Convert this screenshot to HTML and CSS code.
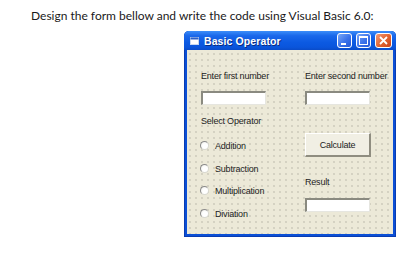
FILE: index.html
```html
<!DOCTYPE html>
<html>
<head>
<meta charset="utf-8">
<link rel="stylesheet" href="styles.css">
</head>
<body>
<p class="task">Design the form bellow and write the code using Visual Basic 6.0:</p>
<div class="window">
  <div class="titlebar">
    <svg class="app-icon" width="9" height="8" viewBox="0 0 9 8">
      <rect x="0.5" y="0.5" width="8" height="7" fill="#fff" stroke="#c8d8f0"/>
      <rect x="0.5" y="0.5" width="8" height="2" fill="#2a5fc8"/>
    </svg>
    <span class="title">Basic Operator</span>
    <div class="controls">
      <span class="cbtn minimize"><svg width="15" height="15" viewBox="0 0 15 15"><rect x="4" y="10" width="5" height="2" fill="#fff"/></svg></span>
      <span class="cbtn maximize"><svg width="15" height="15" viewBox="0 0 15 15"><rect x="3.5" y="3.5" width="8" height="8" fill="none" stroke="#fff"/><rect x="3" y="3" width="9" height="2" fill="#fff"/></svg></span>
      <span class="cbtn close"><svg width="15" height="15" viewBox="0 0 15 15"><path d="M4 4 L11 11 M11 4 L4 11" stroke="#fff" stroke-width="1.8"/></svg></span>
    </div>
  </div>
  <div class="client">
    <div class="col left">
      <div class="label first">Enter first number</div>
      <div class="textbox"></div>
      <div class="label select">Select Operator</div>
      <div class="radio r1"><span class="dot"></span>Addition</div>
      <div class="radio"><span class="dot"></span>Subtraction</div>
      <div class="radio r3"><span class="dot"></span>Multiplication</div>
      <div class="radio"><span class="dot"></span>Diviation</div>
    </div>
    <div class="col right">
      <div class="label first">Enter second number</div>
      <div class="textbox"></div>
      <div class="button">Calculate</div>
      <div class="label result">Result</div>
      <div class="textbox last"></div>
    </div>
  </div>
</div>
</body>
</html>
```
FILE: styles.css
```css
html, body {
  margin: 0;
  background: #fff;
}
.task {
  margin: 0;
  padding: 9px 0 0 31px;
  font-family: Lato, "Open Sans", sans-serif;
  font-size: 12px;
  line-height: 14px;
  color: #1a1a1a;
}
.window {
  margin: 8px 0 0 184px;
  width: 212px;
  height: 206px;
  box-sizing: border-box;
  background: #0b4fd6;
  border-radius: 5px 5px 0 0;
  padding: 0 3px 3px 3px;
  display: flex;
  flex-direction: column;
  box-shadow: inset 0 0 0 1px #0a3cb0;
}
.titlebar {
  height: 19px;
  margin: 0 -3px;
  border-radius: 5px 5px 0 0;
  background: linear-gradient(#3c8ef9 0%, #1a68ea 25%, #0c5ae2 60%, #0a55dc 85%, #0a4bc8 100%);
  display: flex;
  align-items: center;
  padding: 0 4px 0 6px;
}
.app-icon {
  flex: none;
}
.title {
  margin-left: 5px;
  color: #fff;
  font-family: "Liberation Sans", Arial, sans-serif;
  font-weight: bold;
  font-size: 10.5px;
  letter-spacing: 0.1px;
  text-shadow: 1px 1px 0 #0a2c80;
  flex: 1;
}
.controls {
  display: flex;
  gap: 4px;
}
.cbtn {
  width: 15px;
  height: 15px;
  box-sizing: border-box;
  border: 1px solid #fff;
  border-radius: 3px;
  display: block;
  overflow: hidden;
  background: linear-gradient(135deg, #7aa8f7, #3a72ea 55%, #2458d8);
}
.cbtn svg {
  display: block;
  margin: -1px;
}
.cbtn.close {
  width: 17px;
  background: linear-gradient(135deg, #f29a78, #e2622e 55%, #c8441c);
}
.cbtn.close svg {
  margin-left: 0;
}
.client {
  flex: 1;
  background-color: #ece9d8;
  background-image: radial-gradient(circle, #a09e92 0.5px, transparent 0.8px);
  background-size: 6px 6px;
  background-position: 0 1px;
  display: flex;
  font-family: "Liberation Sans", Arial, sans-serif;
  font-size: 9px;
  letter-spacing: -0.2px;
  color: #222;
  padding-left: 14px;
}
.col {
  display: flex;
  flex-direction: column;
}
.left {
  width: 104px;
}
.label {
  height: 11px;
  line-height: 11px;
}
.label.first {
  margin-top: 21px;
}
.textbox {
  width: 65px;
  height: 14px;
  box-sizing: border-box;
  background: #fff;
  border-style: solid;
  border-width: 2px 1px 1px 2px;
  border-color: #8a8a80 #e6e6e0 #e6e6e0 #8a8a80;
  margin-top: 9px;
}
.label.select {
  margin-top: 11px;
}
.radio {
  display: flex;
  align-items: center;
  height: 11px;
  margin-top: 12px;
}
.radio.r1 {
  margin-top: 13px;
}
.radio.r3 {
  margin-top: 11px;
}
.dot {
  width: 9px;
  height: 9px;
  box-sizing: border-box;
  border-radius: 50%;
  border: 1px solid #8a8a8a;
  border-right-color: #d8d8d0;
  border-bottom-color: #d8d8d0;
  background: radial-gradient(circle at 60% 60%, #fff 40%, #e8e8e2);
  margin: 0 6px 0 -1px;
}
.button {
  margin-top: 28px;
  width: 66px;
  height: 24px;
  box-sizing: border-box;
  background: #f1efe4;
  border-style: solid;
  border-width: 1px 2px 2px 1px;
  border-color: #fff #8f8d80 #8f8d80 #fff;
  display: flex;
  align-items: center;
  justify-content: center;
}
.label.result {
  margin-top: 20px;
}
.textbox.last {
  margin-top: 10px;
}
```
